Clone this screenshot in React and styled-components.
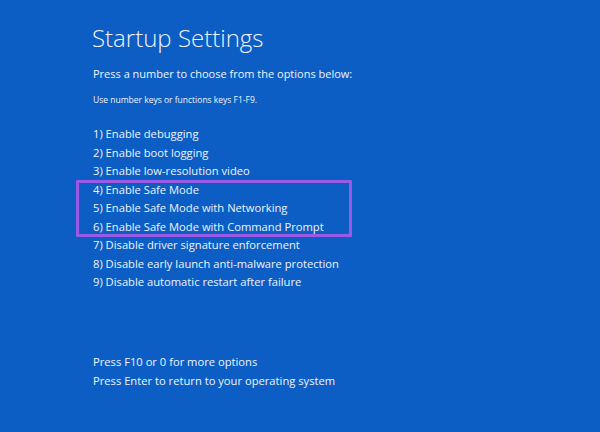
import React from "react";
import styled, { createGlobalStyle } from "styled-components";

const GlobalStyle = createGlobalStyle`
  html, body {
    margin: 0;
    padding: 0;
    background: #0c5ec4;
  }
`;

const Screen = styled.div`
  width: 600px;
  height: 432px;
  box-sizing: border-box;
  background: #0c5ec4;
  color: #eef4fc;
  font-family: "Open Sans", "Noto Sans", sans-serif;
  padding: 20px 0 0 93px;
  display: flex;
  flex-direction: column;
  overflow: hidden;
`;

const Title = styled.h1`
  margin: 0 0 0 -1px;
  font-size: 24px;
  font-weight: 300;
  line-height: 36px;
`;

const Prompt = styled.p`
  margin: 9px 0 0;
  font-size: 11px;
  line-height: 18px;
`;

const Hint = styled.p`
  margin: 10px 0 0;
  font-size: 8.5px;
  line-height: 14px;
`;

const OptionList = styled.ul`
  list-style: none;
  margin: 18px 0 0;
  padding: 0;
  display: flex;
  flex-direction: column;
`;

const Option = styled.li`
  font-size: 11.2px;
  line-height: 18.5px;
  white-space: nowrap;
`;

const Highlight = styled.div`
  position: relative;
  display: flex;
  flex-direction: column;

  &::before {
    content: "";
    position: absolute;
    top: -1px;
    bottom: -1px;
    left: -17px;
    width: 276px;
    box-sizing: border-box;
    border: 3px solid #9a5ae6;
    border-radius: 1px;
    pointer-events: none;
  }
`;

const Footer = styled.div`
  margin-top: auto;
  padding-bottom: 42px;
  display: flex;
  flex-direction: column;
`;

const FooterLine = styled.div`
  font-size: 11.2px;
  line-height: 19px;
`;

const before = [
  "1) Enable debugging",
  "2) Enable boot logging",
  "3) Enable low-resolution video",
];

const safe = [
  "4) Enable Safe Mode",
  "5) Enable Safe Mode with Networking",
  "6) Enable Safe Mode with Command Prompt",
];

const after = [
  "7) Disable driver signature enforcement",
  "8) Disable early launch anti-malware protection",
  "9) Disable automatic restart after failure",
];

const App = () => {
  return (
    <>
      <GlobalStyle />
      <Screen>
        <Title>Startup Settings</Title>
        <Prompt>Press a number to choose from the options below:</Prompt>
        <Hint>Use number keys or functions keys F1-F9.</Hint>
        <OptionList>
          {before.map((o) => (
            <Option key={o}>{o}</Option>
          ))}
          <Highlight>
            {safe.map((o) => (
              <Option key={o}>{o}</Option>
            ))}
          </Highlight>
          {after.map((o) => (
            <Option key={o}>{o}</Option>
          ))}
        </OptionList>
        <Footer>
          <FooterLine>Press F10 or 0 for more options</FooterLine>
          <FooterLine>Press Enter to return to your operating system</FooterLine>
        </Footer>
      </Screen>
    </>
  );
};

export default App;
